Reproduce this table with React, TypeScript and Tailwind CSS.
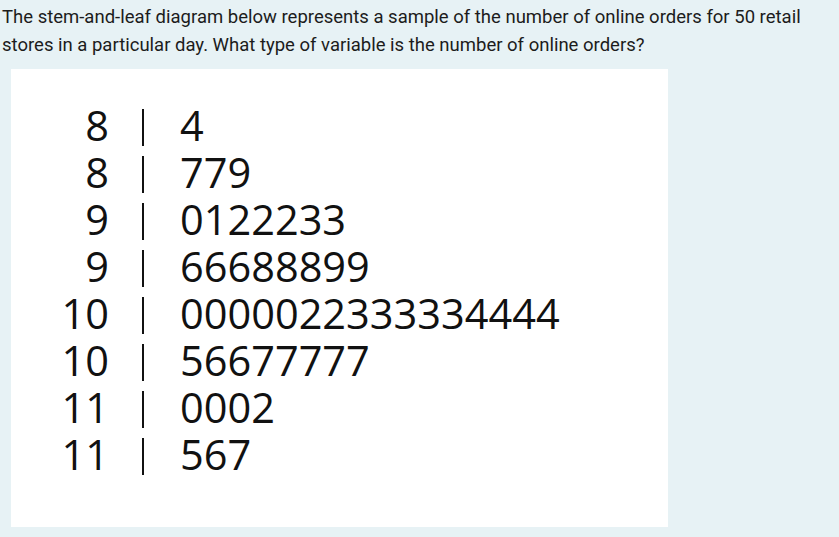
const rows: [string, string][] = [
  ['8', '4'],
  ['8', '779'],
  ['9', '0122233'],
  ['9', '66688899'],
  ['10', '0000022333334444'],
  ['10', '56677777'],
  ['11', '0002'],
  ['11', '567'],
];

export default function App() {
  return (
    <div className="min-h-[537px] w-[839px] bg-[#e7f2f5] pt-[4px]">
      <p className="w-[830px] pl-[2px] font-['Roboto',sans-serif] text-[18.5px] leading-[27.5px] text-[#1c1c1c]">
        The stem-and-leaf diagram below represents a sample of the number of online orders for 50 retail stores in a particular day. What type of variable is the number of online orders?
      </p>
      <div className="ml-[11px] mt-[10px] h-[458px] w-[657px] bg-white pt-[33px] pl-[44px]">
        <div className="grid grid-cols-[54px_71px_auto] font-['Open_Sans',sans-serif] text-[41.5px] leading-[47px] text-[#111]">
          {rows.map(([stem, leaf], i) => (
            <div key={i} className="contents">
              <span className="text-right">{stem}</span>
              <span className="flex">
                <span className="ml-[33px] mt-[7px] mb-[3px] w-[2px] bg-[#111]" />
              </span>
              <span>{leaf}</span>
            </div>
          ))}
        </div>
      </div>
    </div>
  );
}
